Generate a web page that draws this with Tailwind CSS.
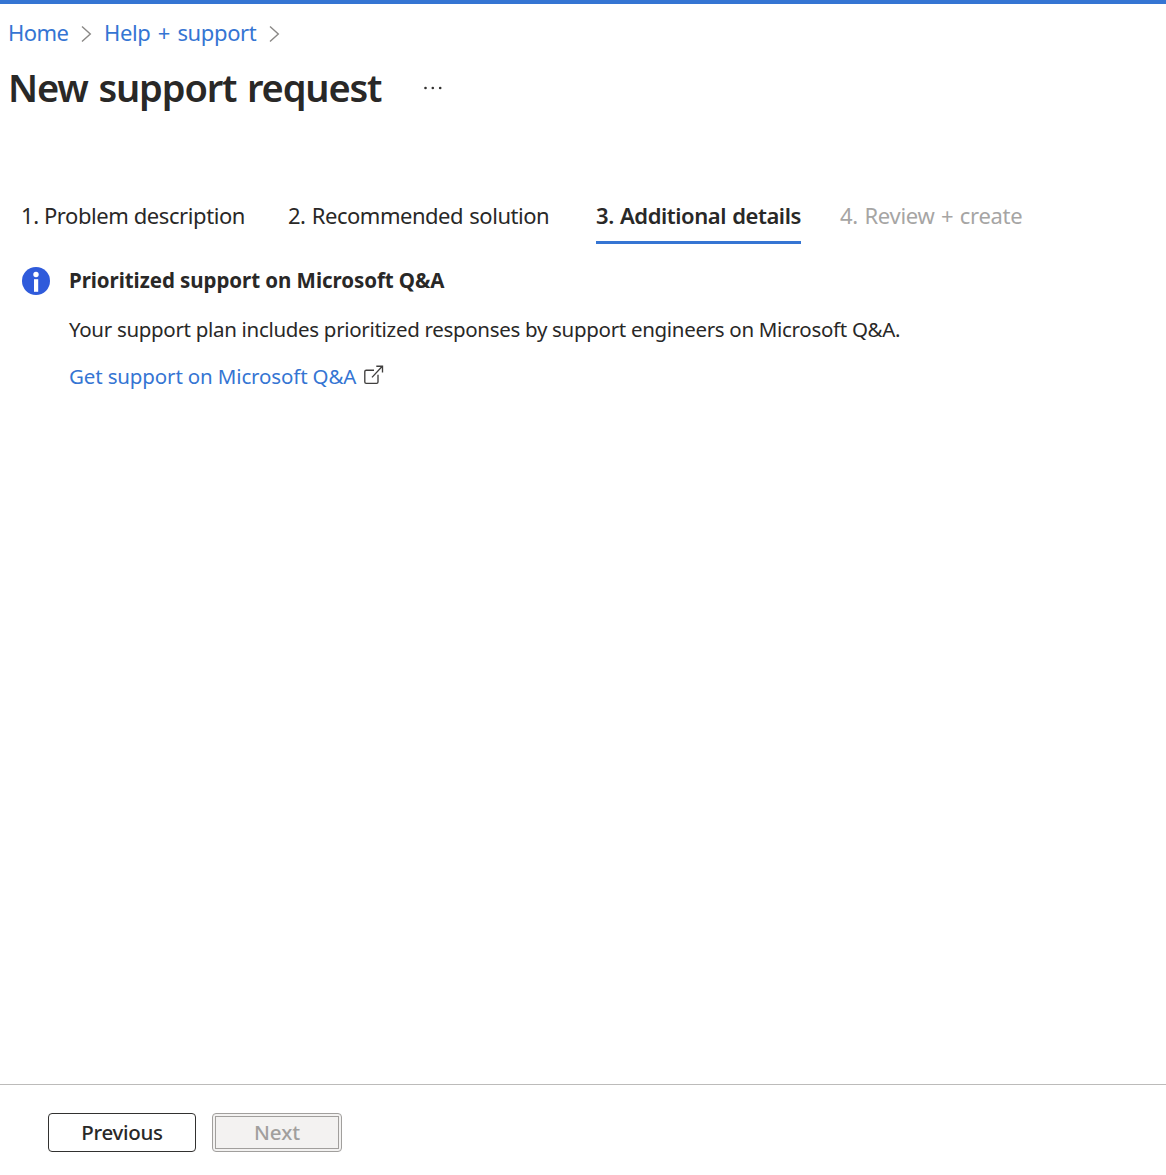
<!DOCTYPE html>
<html lang="en">
<head>
<meta charset="utf-8">
<title>New support request</title>
<script src="https://cdn.jsdelivr.net/npm/@tailwindcss/browser@4"></script>
</head>
<body class="h-[1175px] flex flex-col overflow-hidden border-t-4 border-[#3575d3] bg-white font-['Segoe_UI','Noto_Sans',sans-serif] text-[#292827]">
  <header class="h-[186px] shrink-0 whitespace-nowrap">
    <nav class="flex h-[58px] items-center pl-2 text-[22px] text-[#3575d3]">
      <a class="w-[73px] pb-0.5 tracking-[-0.6px]">Home</a>
      <svg class="mt-0.5 h-[18px] w-[11px] text-[#8a8886]" viewBox="0 0 11 18" fill="none" stroke="currentColor" stroke-width="1.4"><path d="M1 1.5 9.3 9 1 16.5"/></svg>
      <a class="ml-3 w-[165px] pb-0.5 tracking-[-0.36px] [word-spacing:2px]">Help + support</a>
      <svg class="mt-0.5 h-[18px] w-[11px] text-[#8a8886]" viewBox="0 0 11 18" fill="none" stroke="currentColor" stroke-width="1.4"><path d="M1 1.5 9.3 9 1 16.5"/></svg>
    </nav>
    <div class="flex h-[52px] items-center pl-2">
      <h1 class="w-[416px] pb-0.5 text-[38px] leading-[52px] font-semibold tracking-[-1.15px] [word-spacing:2px]">New support request</h1>
      <svg class="h-1 w-[18px]" viewBox="0 0 18 4" fill="#323130"><circle cx="1.5" cy="2" r="1.3"/><circle cx="8.8" cy="2" r="1.3"/><circle cx="16.2" cy="2" r="1.3"/></svg>
    </div>
  </header>
  <div class="flex h-[54px] shrink-0 pl-[21px] text-[22px] leading-[50px] whitespace-nowrap">
    <div class="w-[267px] tracking-[-0.42px]">1. Problem description</div>
    <div class="w-[308px] tracking-[-0.48px] [word-spacing:1px]">2. Recommended solution</div>
    <div class="mr-[38px] w-[205px] border-b-3 border-[#3575d3] font-semibold tracking-[-0.45px] [word-spacing:1px]">3. Additional details</div>
    <div class="pl-px tracking-[-0.27px] text-[#a6a5a4] [word-spacing:1px]">4. Review + create</div>
  </div>
  <main class="flex grow pt-[22px] pl-[22px] whitespace-nowrap">
    <svg class="mt-[1px] h-7 w-7 shrink-0" viewBox="0 0 28 28"><circle cx="14" cy="14" r="14" fill="#2f5bdb"/><circle cx="14" cy="7.5" r="2.7" fill="#fff"/><path d="M12 12.2h4.2v12.6H12z" fill="#fff"/></svg>
    <div class="ml-[19px] text-[20.5px]">
      <h2 class="h-[49px] leading-[28px] font-bold tracking-[-0.06px]">Prioritized support on Microsoft Q&amp;A</h2>
      <p class="h-[47px] leading-[28px] tracking-[-0.31px]">Your support plan includes prioritized responses by support engineers on Microsoft Q&amp;A.</p>
      <div class="flex h-[30px] leading-[28px]">
        <a class="w-[295px] tracking-[-0.14px] text-[#3575d3]">Get support on Microsoft Q&amp;A</a>
        <svg class="mt-[3px] h-5 w-5" viewBox="0 0 20 20" fill="none" stroke="#403f3e" stroke-width="1.35"><path d="M10 5.2H2.2Q.8 5.2.8 6.6V17q0 1.4 1.4 1.4h10.4q1.4 0 1.4-1.4V9.8M8 12.4 18.3 1.3M12.3 1.2h6.2v6.3"/></svg>
      </div>
    </div>
  </main>
  <footer class="flex h-[91px] shrink-0 gap-4 border-t border-[#bcbbba] pt-7 pl-12 text-[20.5px] font-medium">
    <button class="h-[39px] w-[148px] rounded-[4px] border border-[#323130] tracking-[-0.3px]">Previous</button>
    <button class="flex h-[39px] w-[130px] rounded-[4px] border border-[#a19f9d] bg-[#f3f2f1] p-[2px] text-[#a19f9d]" disabled><span class="flex h-full w-full items-center justify-center border border-[#a19f9d]">Next</span></button>
  </footer>
</body>
</html>
